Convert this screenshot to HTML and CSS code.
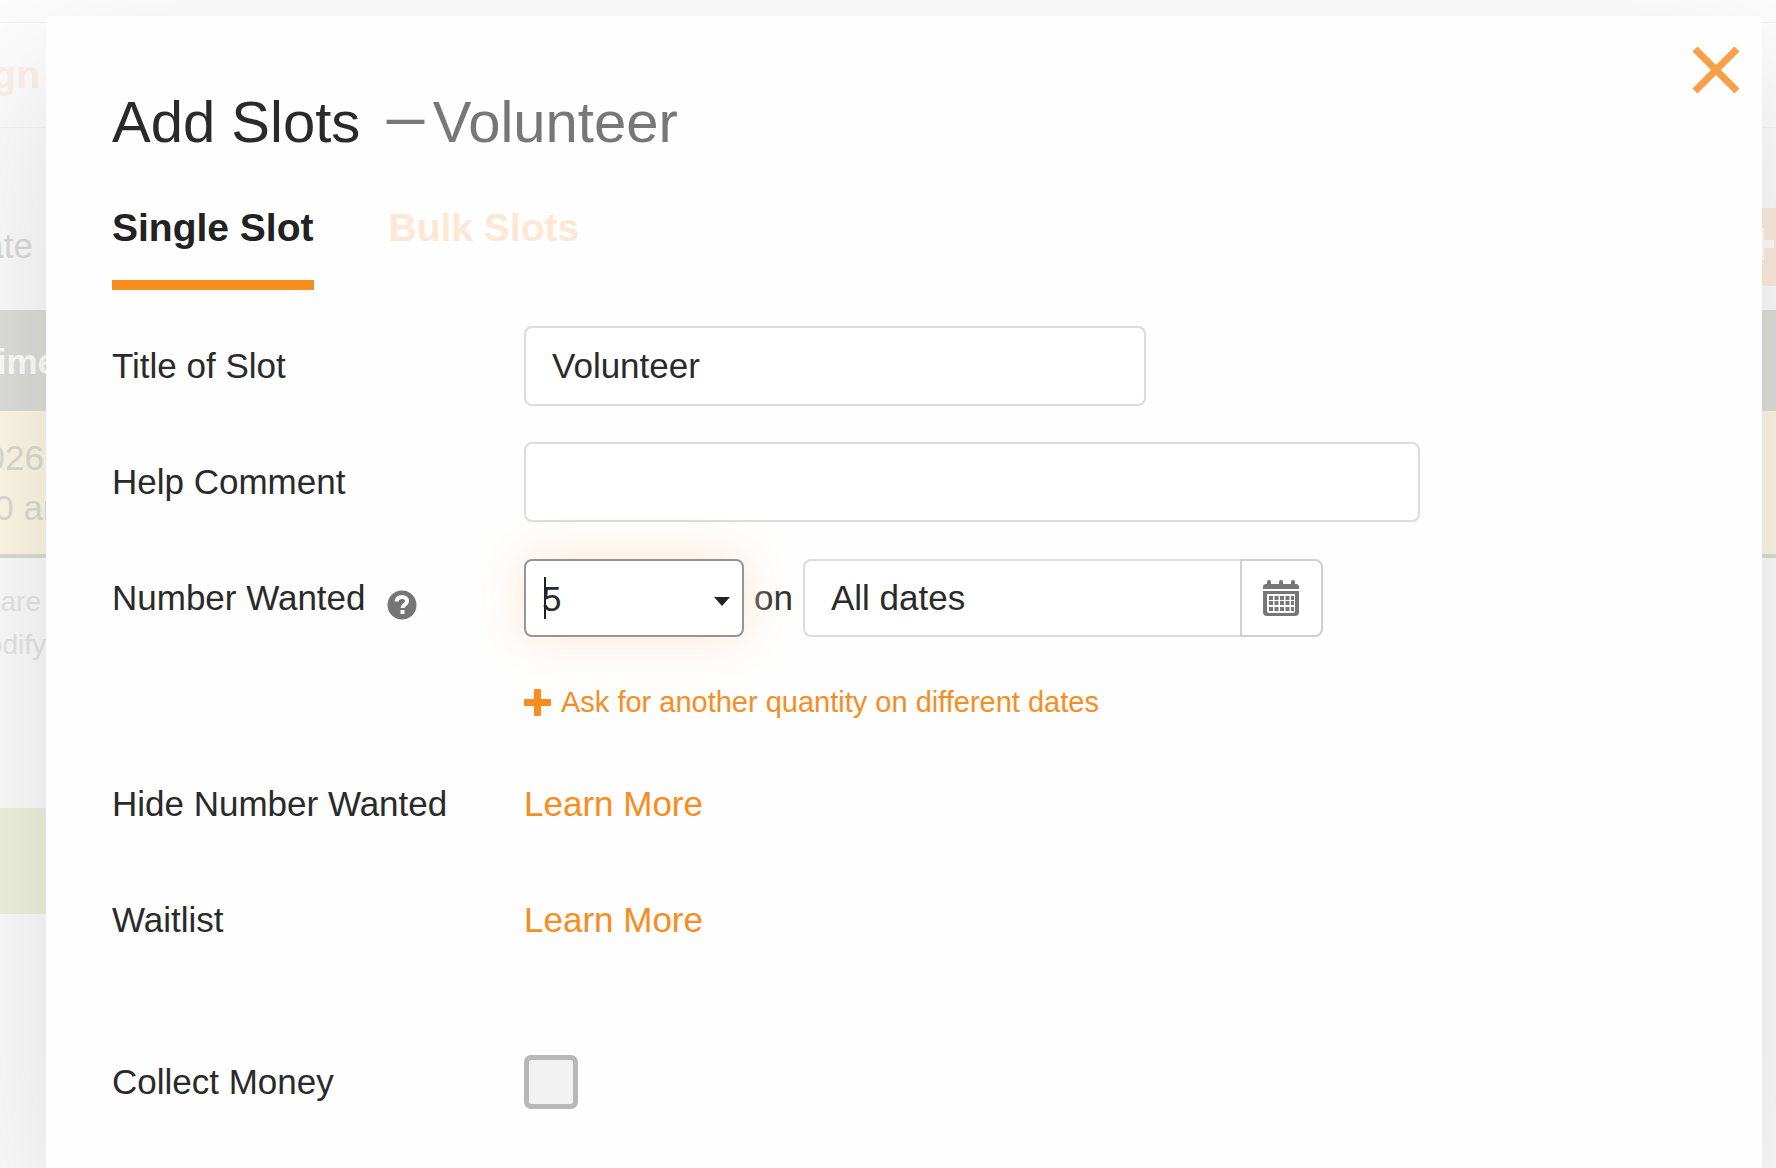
FILE: index.html
```
<!DOCTYPE html>
<html lang="en">
<head>
    <meta charset="utf-8">
    <title>Add Slots</title>
    <link rel="stylesheet" href="styles.css">
</head>
<body>
    <!-- page behind the dialog -->
    <div class="page">
        <div class="top-line"></div>
        <div class="bar logo"><span>gn</span></div>
        <div class="bar date"><span>ate</span>
            <div class="add-btn">
                <svg width="28" height="32" viewBox="0 0 28 32"><path d="M14 0v32M0 16h28" stroke="#fff" stroke-width="8"/></svg>
            </div>
        </div>
        <div class="bar thead"><span>ime</span></div>
        <div class="bar slot">
            <span class="day">026</span>
            <span class="hour">0 am</span>
        </div>
        <div class="bar note">
            <span class="are">are</span>
            <span class="modify">odify</span>
        </div>
        <div class="save"></div>
    </div>

    <div class="modal" role="dialog" aria-labelledby="modalTitle">
        <button class="close" type="button" aria-label="Close">
            <svg width="48" height="48" viewBox="0 0 48 48"><path d="M3 3l42 42M45 3L3 45" stroke="#f99f45" stroke-width="7"/></svg>
        </button>
        <h1 id="modalTitle">Add Slots <span class="sub"><span class="dash">—</span>Volunteer</span></h1>
        <div class="tabs">
            <button class="tab active" type="button">Single Slot</button>
            <button class="tab" type="button">Bulk Slots</button>
        </div>

        <form>
            <div class="row">
                <label for="txtTitle">Title of Slot</label>
                <input class="txt title" type="text" id="txtTitle" value="Volunteer">
            </div>
            <div class="row">
                <label for="txtHelp">Help Comment</label>
                <input class="txt help" type="text" id="txtHelp">
            </div>
            <div class="row">
                <div class="lbl">
                    <label for="selNumber">Number Wanted</label>
                    <svg class="hint" width="30" height="30" viewBox="0 0 30 30">
                        <circle cx="15" cy="15" r="14.5" fill="#757575"/>
                        <path d="M9.500 11.500c.5-3 2.500-4.500 5.500-4.500 2.900 0 5 1.700 5 4.200 0 3.600-4.500 3.400-4.500 6.800" fill="none" stroke="#fff" stroke-width="4"/>
                        <rect x="13.500" y="20" width="4" height="4" fill="#fff"/>
                    </svg>
                </div>
                <div class="qty">
                    <div class="select-box">
                        <select id="selNumber">
                            <option>1</option>
                            <option>2</option>
                            <option>3</option>
                            <option>4</option>
                            <option selected>5</option>
                        </select>
                        <span class="cursor"></span>
                        <svg class="arrow" width="16" height="9" viewBox="0 0 16 9"><path d="M0 0h16L8 9z" fill="#222"/></svg>
                    </div>
                    <label for="txtDates">on</label>
                    <div class="dates">
                        <input class="txt" type="text" id="txtDates" value="All dates">
                        <button class="cal" type="button" aria-label="Pick dates">
                            <svg width="36" height="36" viewBox="0 0 36 36" fill="#777">
                                <path d="M0 9V7q0-3 3-3h1V2q0-2 2-2t2 2v2h8V2q0-2 2-2t2 2v2h8V2q0-2 2-2t2 2v2h1q3 0 3 3v2z"/>
                                <path fill-rule="evenodd" d="M0 11h36v21q0 4-4 4H4q-4 0-4-4zM4 14v17q0 2 2 2h24q2 0 2-2V14z"/>
                                <path d="M6 18h25M6 23h25M6 29h25" fill="none" stroke="#777" stroke-width="4" stroke-dasharray="4 1.500"/>
                            </svg>
                        </button>
                    </div>
                </div>
            </div>
            <div class="more">
                <a href="#">
                    <svg width="27" height="27" viewBox="0 0 27 27"><path d="M10 1q0-1 1-1h5q1 0 1 1v9h9q1 0 1 1v5q0 1-1 1h-9v9q0 1-1 1h-5q-1 0-1-1v-9H1q-1 0-1-1v-5q0-1 1-1h9z" fill="#f78d1e"/></svg>
                    Ask for another quantity on different dates
                </a>
            </div>
            <div class="row">
                <div class="lbl">Hide Number Wanted</div>
                <a href="#">Learn More</a>
            </div>
            <div class="row">
                <div class="lbl">Waitlist</div>
                <a href="#">Learn More</a>
            </div>
            <div class="row money">
                <label for="chkMoney">Collect Money</label>
                <input class="chk" type="checkbox" id="chkMoney">
            </div>
        </form>
    </div>
</body>
</html>
```
FILE: styles.css
```
* {
    box-sizing: border-box;
}
body {
    margin: 0;
    min-height: 100vh;
    display: grid;
    font-family: "Liberation Sans", Arial, sans-serif;
    font-size: 35px;
    line-height: 40px;
    color: #2a2a2a;
    background: #fdfdfd;
    overflow: hidden;
}
.page,
.modal {
    grid-area: 1 / 1;
    min-width: 0;
}

/* page behind */
.page {
    overflow: hidden;
    color: #dcdcdc;
}
.bar {
    display: flex;
    flex-direction: column;
    position: relative;
}
.bar span {
    width: 72px;
    display: flex;
    justify-content: flex-end;
    white-space: nowrap;
}
.top-line {
    height: 23px;
    border-bottom: 1px solid #f4f4f4;
}
.logo {
    height: 105px;
    padding-top: 32px;
    border-bottom: 1px solid #f4f4f4;
    font-size: 39px;
    font-weight: bold;
    color: #fff0e5;
}
.logo span {
    padding-right: 32px;
}
.date {
    height: 182px;
    padding-top: 98px;
}
.date span {
    padding-right: 39px;
}
.add-btn {
    position: absolute;
    right: 0;
    top: 80px;
    width: 60px;
    height: 78px;
    padding: 20px 2px;
    text-align: right;
    background: #ffeddf;
}
.thead {
    height: 101px;
    padding-top: 32px;
    background: #dfdfdc;
    color: #fff;
    font-weight: bold;
}
.thead span {
    padding-right: 15px;
}
.slot {
    height: 147px;
    padding-top: 27px;
    gap: 10px;
    background: #fff9e6;
    border-bottom: 4px solid #dcded6;
    color: #dadcd6;
}
.slot .day {
    padding-right: 28px;
}
.note {
    height: 250px;
    padding-top: 24px;
    gap: 3px;
    font-size: 28px;
    color: #e6e6e6;
}
.note .are {
    padding-right: 31px;
}
.note .modify {
    padding-right: 26px;
}
.save {
    width: 50%;
    height: 106px;
    background: #eff3df;
}

/* dialog */
.modal {
    position: relative;
    margin: 16px 14px 0 46px;
    padding: 74px 66px 40px;
    background: #fefefe;
    box-shadow: 0 60px 150px rgba(0, 0, 0, .14);
}
.close {
    position: absolute;
    top: 30px;
    right: 22px;
    padding: 0;
    border: 0;
    background: none;
    cursor: pointer;
}
.close svg {
    display: block;
}
h1 {
    margin: 0;
    font-size: 58px;
    line-height: 64px;
    font-weight: normal;
}
.sub {
    margin-left: 6px;
    color: #777;
}
.dash {
    margin-right: 5px;
    font-family: Roboto, sans-serif;
}
.tabs {
    display: flex;
    gap: 75px;
    margin-top: 50px;
}
.tab {
    padding: 0 0 28px;
    border: 0;
    border-bottom: 10px solid transparent;
    background: none;
    font: bold 39px/48px "Liberation Sans", Arial, sans-serif;
    color: #ffe8d3;
    cursor: pointer;
}
.tab.active {
    color: #222;
    border-color: #f78d1e;
}
form {
    display: flex;
    flex-direction: column;
    gap: 36px;
    margin-top: 36px;
}
.row {
    display: grid;
    grid-template-columns: 412px 1fr;
    align-items: center;
    min-height: 80px;
}
.lbl {
    display: flex;
    align-items: center;
    gap: 21px;
}
.hint {
    margin-top: 14px;
}
.txt,
select {
    height: 80px;
    padding: 0 26px;
    border: 2px solid #dcdcdc;
    border-radius: 8px;
    background: #fff;
    font: 35px "Liberation Sans", Arial, sans-serif;
    color: #2a2a2a;
}
.title {
    width: 622px;
}
.help {
    width: 896px;
}
.qty {
    display: flex;
    align-items: center;
    gap: 10px;
}
.select-box {
    position: relative;
}
select {
    display: block;
    width: 220px;
    height: 78px;
    padding: 0 16px;
    border-color: #959595;
    box-shadow: 0 0 50px #fde6d5;
    appearance: none;
}
.cursor {
    position: absolute;
    left: 20px;
    top: 18px;
    width: 2px;
    height: 42px;
    background: #222;
}
.arrow {
    position: absolute;
    right: 14px;
    top: 38px;
}
.dates {
    display: flex;
}
.dates .txt {
    width: 437px;
    height: 78px;
    border-right: 0;
    border-radius: 8px 0 0 8px;
}
.cal {
    display: grid;
    place-items: center;
    width: 83px;
    height: 78px;
    padding: 0;
    border: 2px solid #d0d0d0;
    border-radius: 0 8px 8px 0;
    background: #fff;
    cursor: pointer;
}
a {
    color: #f78d1e;
    text-decoration: none;
}
.more {
    padding: 8px 0 6px 412px;
    font-size: 29px;
}
.more a {
    display: flex;
    align-items: center;
    gap: 10px;
}
.money {
    margin-top: 46px;
}
.chk {
    width: 54px;
    height: 54px;
    margin: 0;
    border: 5px solid #b8b8b8;
    border-radius: 7px;
    background: #f2f2f2;
    appearance: none;
}
```
